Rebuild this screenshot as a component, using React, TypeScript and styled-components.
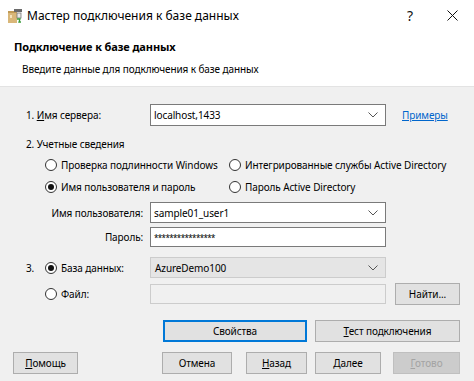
import React from "react";
import styled, { createGlobalStyle, css } from "styled-components";

const Global = createGlobalStyle`
  html, body { margin: 0; padding: 0; background: #f0f0f0; }
  body { font-family: "Noto Sans", "Liberation Sans", sans-serif; font-size: 10px; line-height: 14px; letter-spacing: -0.1px; color: #000; }
  * { box-sizing: border-box; }
`;

const Window = styled.div`
  width: 474px;
  height: 381px;
  display: flex;
  flex-direction: column;
  background: #f0f0f0;
  overflow: hidden;
`;

const TitleBar = styled.div`
  height: 31px;
  background: #fff;
  display: flex;
  align-items: center;
  padding-left: 7px;
`;

const TitleText = styled.span`
  margin-left: 4px;
  font-size: 12px;
  letter-spacing: 0;
  flex: 1;
`;

const TitleButton = styled.span<{ $w: number }>`
  width: ${(p) => p.$w}px;
  text-align: center;
  font-size: 14px;
  color: #111;
  display: flex;
  justify-content: center;
`;

const Header = styled.div`
  background: #fff;
  height: 56px;
  padding: 8px 0 0 14px;
  border-bottom: 1px solid #e3e3e3;
`;

const HeaderTitle = styled.div`
  font-weight: 700;
  font-size: 11px;
  height: 16px;
  line-height: 16px;
`;

const HeaderSub = styled.div`
  margin-top: 6px;
  padding-left: 8px;
  height: 16px;
  line-height: 16px;
`;

const Body = styled.div`
  flex: 1;
  display: flex;
  flex-direction: column;
  padding: 17px 14px 0 26px;
`;

const Row = styled.div<{ $mt: number }>`
  display: flex;
  align-items: center;
  margin-top: ${(p) => p.$mt}px;
`;

const Label = styled.div<{ $w: number; $right?: boolean; $pr?: number }>`
  width: ${(p) => p.$w}px;
  flex: none;
  text-align: ${(p) => (p.$right ? "right" : "left")};
  padding-right: ${(p) => p.$pr ?? 0}px;
  white-space: nowrap;
`;

const U = styled.span`
  text-decoration: underline;
`;

const Field = styled.div<{ $h: number; $variant?: "normal" | "gray" | "disabled" }>`
  width: 236px;
  height: ${(p) => p.$h}px;
  display: flex;
  align-items: center;
  padding-left: 3px;
  border: 1px solid #7a7a7a;
  background: #fff;
  ${(p) =>
    p.$variant === "gray" &&
    css`
      background: #e5e5e5;
      border-color: #cccccc;
      padding-left: 4px;
    `}
  ${(p) =>
    p.$variant === "disabled" &&
    css`
      background: #f0f0f0;
      border-color: #cccccc;
    `}
`;

const FieldText = styled.span<{ $stars?: boolean }>`
  flex: 1;
  white-space: nowrap;
  ${(p) =>
    p.$stars &&
    css`
      font-size: 8px;
      letter-spacing: -0.6px;
      padding-top: 2px;
    `}
`;

const Chevron = styled.svg`
  width: 10px;
  height: 6px;
  margin-right: 7px;
  flex: none;
`;

const LinkText = styled.a`
  margin-left: 16px;
  color: #0066cc;
  text-decoration: underline;
  cursor: pointer;
`;

const RadioGrid = styled.div`
  display: grid;
  grid-template-columns: 184px auto;
  row-gap: 2px;
  margin-top: 4px;
  padding-left: 19px;
`;

const RadioItem = styled.label`
  display: flex;
  align-items: center;
  height: 20px;
  white-space: nowrap;
`;

const RadioCircle = styled.span<{ $checked?: boolean }>`
  width: 12px;
  height: 12px;
  border-radius: 50%;
  border: 1px solid #333;
  background: #fff;
  margin-right: 4px;
  display: flex;
  align-items: center;
  justify-content: center;
  flex: none;
  &::after {
    content: "";
    display: ${(p) => (p.$checked ? "block" : "none")};
    width: 6px;
    height: 6px;
    border-radius: 50%;
    background: #111;
  }
`;

const Button = styled.button<{ $w: number; $focused?: boolean; $disabled?: boolean }>`
  width: ${(p) => p.$w}px;
  height: 22px;
  flex: none;
  font-family: inherit;
  font-size: 10px;
  letter-spacing: -0.1px;
  color: #000;
  background: #e1e1e1;
  border: 1px solid #adadad;
  padding: 0;
  ${(p) =>
    p.$focused &&
    css`
      border: 2px solid #0078d7;
    `}
  ${(p) =>
    p.$disabled &&
    css`
      background: #cccccc;
      border-color: #bfbfbf;
      color: #a3a3a3;
    `}
`;

const ButtonRow = styled.div<{ $mt: number }>`
  display: flex;
  align-items: center;
  margin-top: ${(p) => p.$mt}px;
  margin-left: -13px;
`;

const Spacer = styled.div<{ $w: number }>`
  width: ${(p) => p.$w}px;
  flex: none;
`;

const ChevronIcon = () => (
  <Chevron viewBox="0 0 10 6">
    <path d="M0.5 0.5 L5 5 L9.5 0.5" fill="none" stroke="#555" strokeWidth="1" />
  </Chevron>
);

const AppIcon = () => (
  <svg width="16" height="16" viewBox="0 0 16 16">
    <rect x="1" y="3" width="9" height="12" fill="#d9b779" />
    <rect x="1" y="3" width="9" height="2" fill="#c09a55" />
    <rect x="3" y="7" width="2" height="3" fill="#f4e3bd" />
    <rect x="7" y="1" width="8" height="3" fill="#6b6b6b" />
    <rect x="10" y="5" width="4" height="5" fill="#e8e8e8" stroke="#777" strokeWidth="0.8" />
    <path d="M10 11 L13 11 L12 14 L14 14" fill="none" stroke="#3a9a3a" strokeWidth="1.3" />
  </svg>
);

export default function App() {
  return (
    <Window>
      <Global />
      <TitleBar>
        <AppIcon />
        <TitleText>Мастер подключения к базе данных</TitleText>
        <TitleButton $w={20}>?</TitleButton>
        <Spacer $w={22} />
        <TitleButton $w={20}>
          <svg width="11" height="11" viewBox="0 0 11 11">
            <path d="M0.5 0.5 L10.5 10.5 M10.5 0.5 L0.5 10.5" stroke="#111" strokeWidth="1" />
          </svg>
        </TitleButton>
        <Spacer $w={12} />
      </TitleBar>
      <Header>
        <HeaderTitle>Подключение к базе данных</HeaderTitle>
        <HeaderSub>Введите данные для подключения к базе данных</HeaderSub>
      </Header>
      <Body>
        <Row $mt={0}>
          <Label $w={124}>
            1. <U>И</U>мя сервера:
          </Label>
          <Field $h={22}>
            <FieldText>localhost,1433</FieldText>
            <ChevronIcon />
          </Field>
          <LinkText>Примеры</LinkText>
        </Row>
        <Row $mt={11}>
          <Label $w={124}>2. Учетные сведения</Label>
        </Row>
        <RadioGrid>
          <RadioItem>
            <RadioCircle />
            Проверка подлинности Windows
          </RadioItem>
          <RadioItem>
            <RadioCircle />
            Интегрированные службы Active Directory
          </RadioItem>
          <RadioItem>
            <RadioCircle $checked />
            Имя пользователя и пароль
          </RadioItem>
          <RadioItem>
            <RadioCircle />
            Пароль Active Directory
          </RadioItem>
        </RadioGrid>
        <Row $mt={5}>
          <Label $w={124} $right $pr={7}>
            Имя пользователя:
          </Label>
          <Field $h={21}>
            <FieldText>sample01_user1</FieldText>
            <ChevronIcon />
          </Field>
        </Row>
        <Row $mt={4}>
          <Label $w={124} $right $pr={7}>
            Пароль:
          </Label>
          <Field $h={20}>
            <FieldText $stars>****************</FieldText>
          </Field>
        </Row>
        <Row $mt={10}>
          <Label $w={19}>3.</Label>
          <Label $w={105}>
            <RadioItem>
              <RadioCircle $checked />
              База данных:
            </RadioItem>
          </Label>
          <Field $h={21} $variant="gray">
            <FieldText>AzureDemo100</FieldText>
            <ChevronIcon />
          </Field>
        </Row>
        <Row $mt={5}>
          <Label $w={19} />
          <Label $w={105}>
            <RadioItem>
              <RadioCircle />
              Файл:
            </RadioItem>
          </Label>
          <Field $h={20} $variant="disabled" />
          <Spacer $w={9} />
          <Button $w={65}>Найти...</Button>
        </Row>
        <ButtonRow $mt={15}>
          <Spacer $w={150} />
          <Button $w={144} $focused>
            Свойства
          </Button>
          <Spacer $w={8} />
          <Button $w={145}>
            <U>Т</U>ест подключения
          </Button>
        </ButtonRow>
        <ButtonRow $mt={10}>
          <Button $w={65}>
            <U>П</U>омощь
          </Button>
          <Spacer $w={84} />
          <Button $w={70}>Отмена</Button>
          <Spacer $w={14} />
          <Button $w={61}>
            <U>Н</U>азад
          </Button>
          <Spacer $w={8} />
          <Button $w={66}>
            <U>Д</U>алее
          </Button>
          <Spacer $w={12} />
          <Button $w={67} $disabled>
            <U>Г</U>отово
          </Button>
        </ButtonRow>
      </Body>
    </Window>
  );
}
